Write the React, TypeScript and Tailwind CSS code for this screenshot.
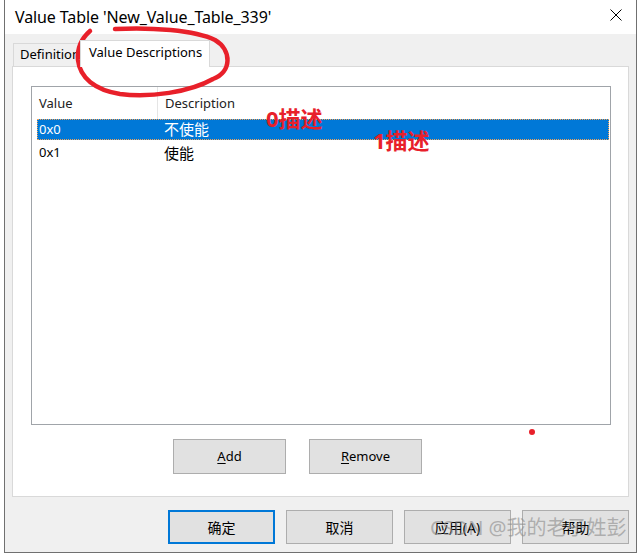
import React from "react"

const rows = [
  { value: "0x0", desc: "不使能", selected: true },
  { value: "0x1", desc: "使能", selected: false },
]

function UBtn({ u, rest, className }: { u: string; rest: string; className: string }) {
  return (
    <button type="button" className={className}>
      <span className="underline underline-offset-2">{u}</span>
      {rest}
    </button>
  )
}

export default function App() {
  return (
    <div className="relative w-[642px] h-[553px] bg-white overflow-hidden font-['Noto_Sans','Noto_Sans_CJK_SC',sans-serif] text-black">
      {/* window */}
      <div className="ml-[4px] w-[633px] h-[553px] border-x border-b border-[#707070] flex flex-col">
        {/* title bar */}
        <div className="h-[34px] bg-white flex items-center justify-between pl-[10px] pr-[14px]">
          <span className="text-[16px] tracking-[-0.1px]">Value Table 'New_Value_Table_339'</span>
          <svg width="12" height="12" viewBox="0 0 12 12" className="mt-[-4px]">
            <path d="M0.5 0.5 L11.5 11.5 M11.5 0.5 L0.5 11.5" stroke="#000" strokeWidth="1" />
          </svg>
        </div>

        {/* body */}
        <div className="flex-1 bg-[#f0f0f0] flex flex-col">
          {/* tabs */}
          <div className="mt-[6px] h-[26px] ml-[8px] flex items-end">
            <div className="h-[23px] w-[69px] border border-b-0 border-[#d9d9d9] bg-[#f0f0f0] text-[13px] pl-[6px] leading-[21px] overflow-hidden whitespace-nowrap">
              Definition
            </div>
            <div className="relative z-10 -mb-px -ml-[2px] h-[27px] w-[130px] border border-b-0 border-[#d9d9d9] bg-white text-[13px] pl-[8px] leading-[22px] whitespace-nowrap">
              Value Descriptions
            </div>
          </div>

          {/* panel */}
          <div className="ml-[7px] w-[617px] h-[431px] border border-[#d9d9d9] bg-white pl-[18px] pt-[19px]">
            {/* list */}
            <div className="w-[580px] h-[339px] border border-[#a0a4a9] bg-white">
              <div className="h-[32px] flex text-[13px] text-[#222]">
                <div className="w-[126px] border-r border-[#e5e5e5] pl-[7px] leading-[32px]">Value</div>
                <div className="pl-[7px] leading-[32px]">Description</div>
              </div>
              <div className="ml-[5px] w-[572px]">
                {rows.map((r) => (
                  <div
                    key={r.value}
                    className={
                      r.selected
                        ? "h-[21px] flex items-center bg-[#0078d7] text-white border border-dotted border-[#f0a35a] text-[13px]"
                        : "h-[23px] flex items-center text-black border border-transparent text-[13px] pt-[3px]"
                    }
                  >
                    <div className="w-[119px] pl-[1px]">{r.value}</div>
                    <div className="pl-[7px] text-[15px]">{r.desc}</div>
                  </div>
                ))}
              </div>
            </div>

            {/* add / remove */}
            <div className="mt-[14px] ml-[142px] flex gap-[23px]">
              <UBtn
                u="A"
                rest="dd"
                className="w-[113px] h-[35px] bg-[#e1e1e1] border border-[#adadad] text-[13px]"
              />
              <UBtn
                u="R"
                rest="emove"
                className="w-[113px] h-[35px] bg-[#e1e1e1] border border-[#adadad] text-[13px]"
              />
            </div>
          </div>

          {/* dialog buttons */}
          <div className="mt-[13px] ml-[163px] flex gap-[11px] text-[14px]">
            <button type="button" className="w-[107px] h-[34px] bg-[#e1e1e1] border-2 border-[#0078d7]">
              确定
            </button>
            <button type="button" className="w-[107px] h-[34px] bg-[#e1e1e1] border border-[#adadad]">
              取消
            </button>
            <button type="button" className="w-[107px] h-[34px] bg-[#e1e1e1] border border-[#adadad]">
              应用(A)
            </button>
            <button type="button" className="w-[107px] h-[34px] bg-[#e1e1e1] border border-[#adadad]">
              帮助
            </button>
          </div>
        </div>
      </div>

      {/* annotations */}
      <svg className="absolute left-0 top-0 pointer-events-none" width="642" height="553">
        <path
          d="M115 29 C150 27, 195 30, 215 40 C232 50, 232 72, 213 79 C190 92, 150 98, 120 94 C95 90, 80 78, 78 60 C77 48, 82 38, 90 31"
          fill="none"
          stroke="#e8202a"
          strokeWidth="4.5"
          strokeLinecap="round"
        />
        <circle cx="532" cy="432" r="3" fill="#e8202a" />
      </svg>
      <div className="absolute left-[266px] top-[107px] text-[22px] font-bold text-[#e8202a] leading-none">0描述</div>
      <div className="absolute left-[373px] top-[129px] text-[22px] font-bold text-[#e8202a] leading-none">1描述</div>
      <div className="absolute left-[430px] top-[518px] text-[20px] text-[#8a8a8a]/60 whitespace-nowrap leading-none">
        CSDN @我的老子姓彭
      </div>
    </div>
  )
}
